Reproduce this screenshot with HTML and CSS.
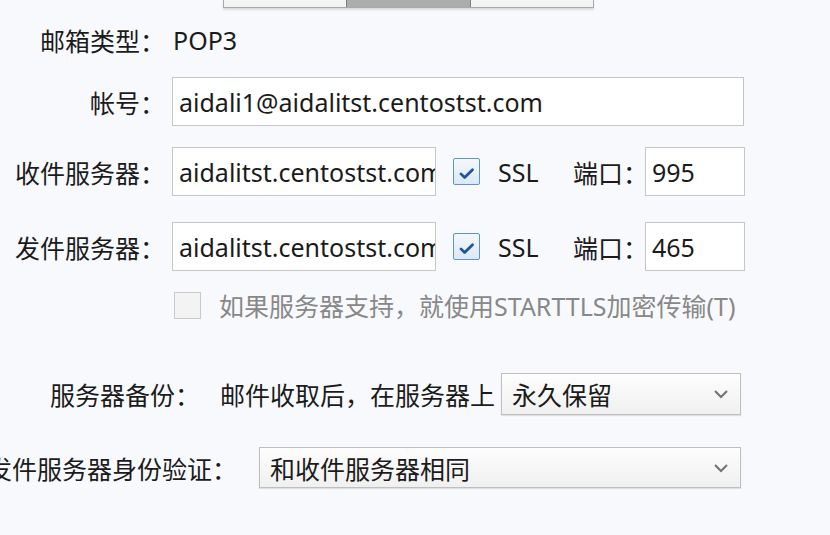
FILE: index.html
```html
<!DOCTYPE html>
<html lang="zh-CN">
<head>
<meta charset="utf-8">
<link rel="stylesheet" href="styles.css">
</head>
<body>
<div class="page">
  <div class="seg">
    <div class="seg-item"></div>
    <div class="seg-item seg-active"></div>
    <div class="seg-item"></div>
  </div>

  <div class="row row1">
    <div class="label">邮箱类型：</div>
    <div class="value">POP3</div>
  </div>

  <div class="row row2">
    <div class="label">帐号：</div>
    <div class="input input-wide">aidali1@aidalitst.centostst.com</div>
  </div>

  <div class="row row3">
    <div class="label">收件服务器：</div>
    <div class="input input-host">aidalitst.centostst.com</div>
    <span class="check"><svg width="27" height="27" viewBox="0 0 27 27"><polyline points="7.5,15 11.5,19 20,10.5" fill="none" stroke="#1f5699" stroke-width="3" stroke-linecap="round" stroke-linejoin="round"/></svg></span>
    <span class="ssl">SSL</span>
    <span class="port-label">端口：</span>
    <div class="input input-port">995</div>
  </div>

  <div class="row row4">
    <div class="label">发件服务器：</div>
    <div class="input input-host">aidalitst.centostst.com</div>
    <span class="check"><svg width="27" height="27" viewBox="0 0 27 27"><polyline points="7.5,15 11.5,19 20,10.5" fill="none" stroke="#1f5699" stroke-width="3" stroke-linecap="round" stroke-linejoin="round"/></svg></span>
    <span class="ssl">SSL</span>
    <span class="port-label">端口：</span>
    <div class="input input-port">465</div>
  </div>

  <div class="row row5">
    <span class="check-off"></span>
    <span class="disabled-text">如果服务器支持，就使用STARTTLS加密传输(T)</span>
  </div>

  <div class="row row6">
    <div class="label label6">服务器备份：</div>
    <span class="mid-text">邮件收取后，在服务器上</span>
    <div class="select select6"><span>永久保留</span><svg class="chev" width="16" height="10" viewBox="0 0 16 10"><polyline points="2,2 8,8 14,2" fill="none" stroke="#727272" stroke-width="2"/></svg></div>
  </div>

  <div class="row row7">
    <div class="label label7">发件服务器身份验证：</div>
    <div class="select select7"><span>和收件服务器相同</span><svg class="chev" width="16" height="10" viewBox="0 0 16 10"><polyline points="2,2 8,8 14,2" fill="none" stroke="#727272" stroke-width="2"/></svg></div>
  </div>
</div>
</body>
</html>
```

FILE: styles.css
```css
html, body {
  margin: 0;
  padding: 0;
  background: #f8f9fd;
}
body {
  width: 830px;
  height: 535px;
  overflow: hidden;
  font-family: "Noto Sans", "Noto Sans CJK SC", sans-serif;
  font-size: 25px;
  color: #1b1b1b;
}
.page {
  display: flex;
  flex-direction: column;
}
.seg {
  display: flex;
  margin-left: 223px;
  width: 369px;
  height: 7px;
  border: 1px solid #a9a9a9;
  border-top: none;
  box-shadow: 0 2px 2px rgba(0,0,0,0.12);
}
.seg-item {
  flex: 1;
  background: #f3f3f3;
}
.seg-active {
  background: #acacac;
  border-left: 1px solid #7d7d7d;
  border-right: 1px solid #7d7d7d;
}
.row {
  display: flex;
  align-items: center;
}
.label {
  width: 165px;
  flex: none;
  text-align: right;
  white-space: nowrap;
}
.row1 { margin-top: 10px; height: 44px; }
.row2 { margin-top: 15px; height: 49px; }
.row3 { margin-top: 21px; height: 49px; }
.row4 { margin-top: 26px; height: 49px; }
.row5 { margin-top: 21px; height: 26px; }
.row6 { margin-top: 55px; height: 42px; }
.row7 { margin-top: 32px; height: 41px; }
.value {
  margin-left: 8px;
}
.input {
  box-sizing: border-box;
  height: 49px;
  margin-left: 7px;
  background: #fff;
  border: 1px solid #c6c6c6;
  padding: 0 0 0 6px;
  display: flex;
  align-items: center;
  white-space: nowrap;
  overflow: hidden;
  flex: none;
}
.input-wide { width: 572px; }
.input-host { width: 264px; }
.input-port { width: 100px; margin-left: 0; }
.check {
  box-sizing: border-box;
  flex: none;
  width: 27px;
  height: 27px;
  margin-left: 17px;
  border: 1px solid #5f93cc;
  border-radius: 2px;
  background: linear-gradient(#f4f8fd, #dbe8f6);
  display: flex;
}
.check svg { display: block; }
.ssl {
  flex: none;
  margin-left: 18px;
  width: 75px;
}
.port-label {
  flex: none;
  width: 72px;
  white-space: nowrap;
}
.check-off {
  box-sizing: border-box;
  flex: none;
  width: 27px;
  height: 27px;
  margin-left: 174px;
  border: 1px solid #c9c9c9;
  background: #f3f3f3;
}
.disabled-text {
  margin-left: 18px;
  color: #888888;
  white-space: nowrap;
}
.label6 {
  width: 200px;
}
.mid-text {
  flex: none;
  margin-left: 20px;
  width: 281px;
  white-space: nowrap;
}
.select {
  box-sizing: border-box;
  flex: none;
  border: 1px solid #bfbfbf;
  background: linear-gradient(#fdfdfd, #f0f0f0);
  box-shadow: 0 1px 1px rgba(0,0,0,0.10);
  display: flex;
  align-items: center;
  justify-content: space-between;
  padding: 0 11px 0 10px;
  white-space: nowrap;
}
.select6 {
  width: 240px;
  height: 42px;
}
.select7 {
  width: 482px;
  height: 41px;
  margin-left: 22px;
}
.label7 {
  width: 237px;
  display: flex;
  justify-content: flex-end;
}
.chev { display: block; flex: none; }
```
